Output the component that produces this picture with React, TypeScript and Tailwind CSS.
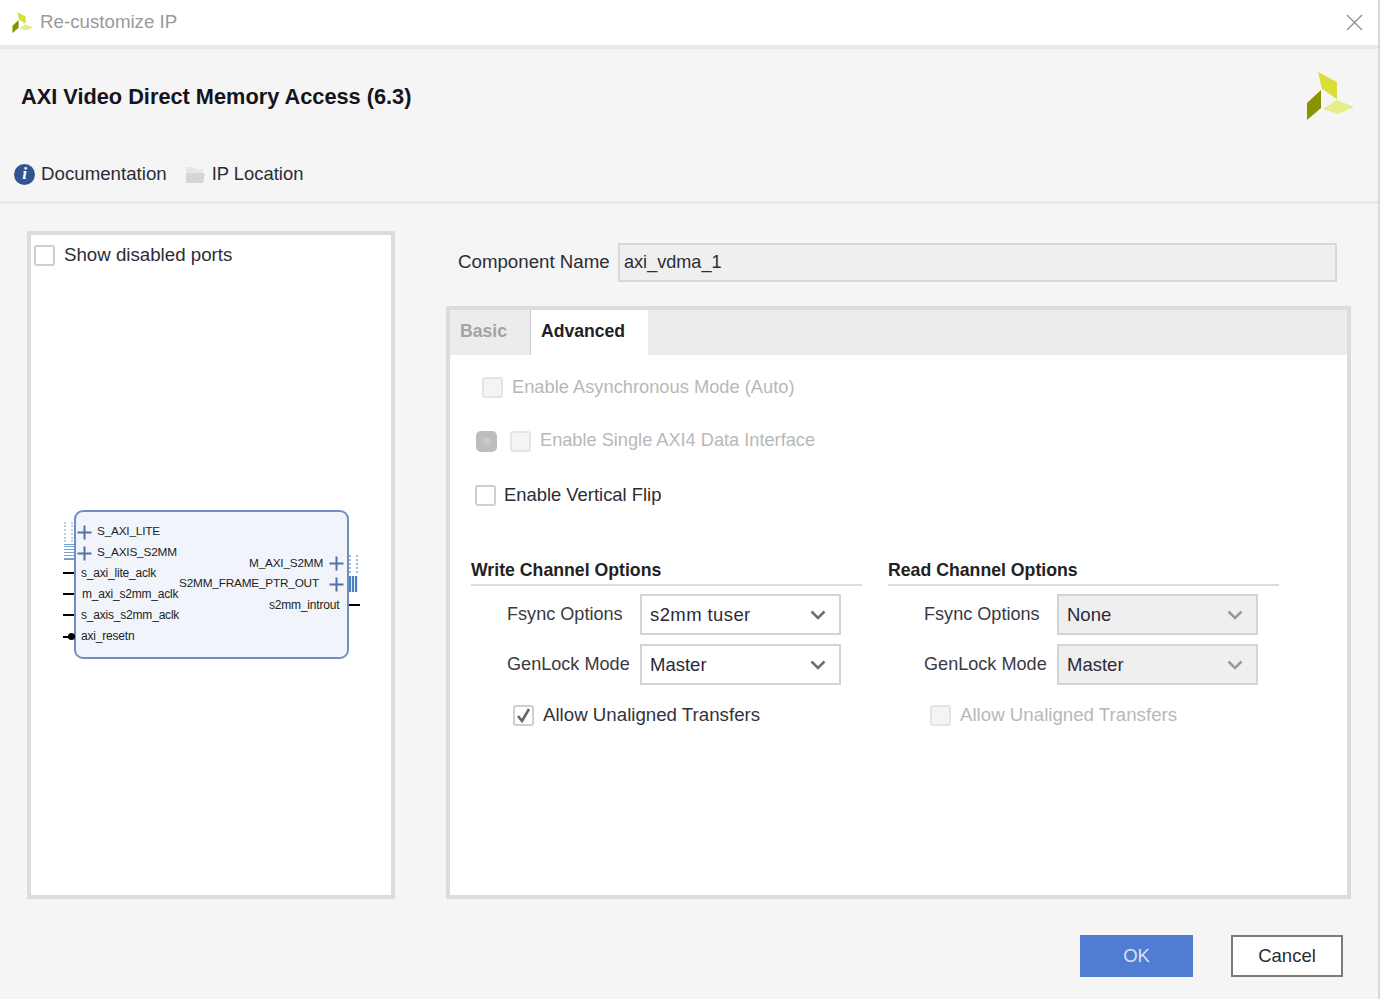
import React from "react";

const Logo = ({ s = 1 }: { s?: number }) => (
  <svg width={48 * s} height={48 * s} viewBox="0 0 48 48">
    <path d="M12 0 L31 10 L31 27 L16 17 Z" fill="#d9df36" />
    <path d="M15 18 L15 36 L1 48 L1 31 Z" fill="#8b9200" />
    <path d="M31 28 L48 35 L32 42 L17 37 Z" fill="#e6eb8c" />
  </svg>
);

const Check = ({ disabled = false, checked = false, className = "" }: { disabled?: boolean; checked?: boolean; className?: string }) => (
  <span
    className={`flex h-[21px] w-[21px] shrink-0 items-center justify-center rounded-[3px] border-2 ${disabled ? "border-[#e4e4e4] bg-[#f4f4f4]" : "border-[#cfcfcf] bg-white"} ${className}`}
  >
    {checked && (
      <svg width="17" height="17" viewBox="0 0 17 17">
        <path d="M3 9 L7 14 L14 2" fill="none" stroke="#666" strokeWidth="2.6" />
      </svg>
    )}
  </span>
);

const Select = ({ value, disabled = false, wide = false }: { value: string; disabled?: boolean; wide?: boolean }) => (
  <div
    className={`flex h-[41px] w-[201px] items-center justify-between border-2 border-[#d4d4d4] pl-[8px] pr-[13px] text-[18.5px] text-[#2b2b35] ${disabled ? "bg-[#efefef]" : "bg-white"}`}
  >
    <span className={wide ? "tracking-[0.4px]" : ""}>{value}</span>
    <svg width="16" height="10" viewBox="0 0 16 10">
      <path d="M1.5 1.5 L8 8 L14.5 1.5" fill="none" stroke={disabled ? "#9a9a9a" : "#6f6f6f"} strokeWidth="2.6" />
    </svg>
  </div>
);

const Channel = ({ title, fsync, ro, checked, width }: { title: string; fsync: string; ro?: boolean; checked: boolean; width: string }) => (
  <div className={`flex flex-col ${width}`}>
    <div className="border-b-2 border-[#dcdcdc] pb-[3px] text-[17.7px] font-bold leading-[22px] text-[#222]">{title}</div>
    <div className="mt-[8px] flex flex-col gap-[9px] pl-[36px] text-[18.1px] text-[#3a3a44]">
      <div className="flex items-center">
        <span className="w-[133px]">Fsync Options</span>
        <Select value={fsync} disabled={ro} wide={!ro} />
      </div>
      <div className="flex items-center">
        <span className="w-[133px]">GenLock Mode</span>
        <Select value="Master" disabled={ro} />
      </div>
    </div>
    <div className="mt-[16px] flex items-center gap-[9px] pl-[42px]">
      <Check checked={checked} disabled={ro} />
      <span className={`text-[18.7px] ${ro ? "text-[#b8b8b8]" : "text-[#33333d]"}`}>Allow Unaligned Transfers</span>
    </div>
  </div>
);

const Plus = ({ x, y }: { x: number; y: number }) => (
  <svg className="absolute" style={{ left: x, top: y }} width="15" height="15" viewBox="0 0 15 15">
    <path d="M7.5 0.5 V14.5 M0.5 7.5 H14.5" stroke="#4f72a6" strokeWidth="2" />
  </svg>
);

const Pin = ({ x, y, w = 11 }: { x: number; y: number; w?: number }) => (
  <span className="absolute h-[2px] bg-black" style={{ left: x, top: y, width: w }} />
);

const labels: [string, number, number, number][] = [
  ["S_AXI_LITE", 97, 523, 11.8],
  ["S_AXIS_S2MM", 97, 544, 11.8],
  ["s_axi_lite_aclk", 81, 565, 12],
  ["m_axi_s2mm_aclk", 82, 586, 12],
  ["s_axis_s2mm_aclk", 81, 607, 12],
  ["axi_resetn", 81, 628, 12],
  ["M_AXI_S2MM", 249, 555, 11.8],
  ["S2MM_FRAME_PTR_OUT", 179, 575, 11.8],
  ["s2mm_introut", 269, 597, 12],
];

const Diagram = () => (
  <div className="relative h-full w-full">
    <div className="absolute left-[43px] top-[275px] h-[149px] w-[275px] rounded-[9px] border-2 border-[#6f8fc0] bg-[#f1f5fb]" />
    {labels.map(([t, x, y, f]) => (
      <span
        key={t}
        className="absolute whitespace-nowrap text-[#222] [letter-spacing:-0.2px]"
        style={{ left: x - 31, top: y - 235, fontSize: f, lineHeight: "17px" }}
      >
        {t}
      </span>
    ))}
    <Plus x={46} y={290} />
    <Plus x={46} y={311} />
    <Plus x={298} y={321} />
    <Plus x={298} y={342} />
    <Pin x={32} y={337} />
    <Pin x={32} y={358} />
    <Pin x={32} y={379} />
    <Pin x={32} y={401} w={8} />
    <span className="absolute left-[37px] top-[398px] h-[7px] w-[7px] rounded-full bg-black" />
    <Pin x={318} y={369} />
    <span className="absolute left-[33px] top-[287px] h-[20px] w-[9px] border-x-2 border-dotted border-[#b9cde6]" />
    <span className="absolute left-[33px] top-[309px] h-[16px] w-[10px] border-y border-[#6f9bd0] bg-[repeating-linear-gradient(0deg,#7aa3d4_0,#7aa3d4_1px,#ffffff_1px,#ffffff_3px)]" />
    <span className="absolute left-[318px] top-[320px] h-[18px] w-[9px] border-x-2 border-dotted border-[#9dbbe0]" />
    <span className="absolute left-[318px] top-[341px] h-[16px] w-[9px] bg-[repeating-linear-gradient(90deg,#4f7fc0_0,#4f7fc0_2px,#dfe9f6_2px,#dfe9f6_3px)]" />
  </div>
);

export default function App() {
  return (
    <div className="flex h-[999px] w-[1380px] flex-col overflow-hidden border-r-2 border-[#d8d8d8] bg-[#f5f5f5] font-['Liberation_Sans',Arial,sans-serif]">
      <div className="flex h-[49px] shrink-0 items-center justify-between border-b-4 border-[#e8e8e8] bg-white pl-[12px] pr-[15px]">
        <div className="flex items-center gap-[7px]">
          <Logo s={0.44} />
          <span className="-mt-[1px] text-[18.7px] text-[#9a9a9a]">Re-customize IP</span>
        </div>
        <svg width="17" height="17" viewBox="0 0 17 17">
          <path d="M1 1 L16 16 M16 1 L1 16" stroke="#8a8a8a" strokeWidth="1.2" />
        </svg>
      </div>

      <div className="relative flex h-[155px] shrink-0 flex-col border-b-[3px] border-[#e8e8e8] pl-[21px]">
        <div className="mt-[35px] text-[21.75px] font-bold leading-[26px] text-[#14141c]">AXI Video Direct Memory Access (6.3)</div>
        <div className="absolute right-[24px] top-[23px]">
          <Logo />
        </div>
        <div className="-ml-[7px] mt-[53px] flex items-center text-[18.7px] leading-[22px] text-[#2c2c36]">
          <span className="mr-[6px] flex h-[21px] w-[21px] items-center justify-center rounded-full bg-[#33558f] font-['Liberation_Serif',serif] text-[17px] font-bold italic text-white">i</span>
          <span>Documentation</span>
          <svg className="ml-[18px] mr-[6px]" width="21" height="19" viewBox="0 0 21 19">
            <path d="M1 2 H8 L10 4 H18 V8 H1 Z" fill="#e6e6e6" />
            <path d="M1 8 H20 L18 18 H1 Z" fill="#d6d6d6" />
          </svg>
          <span className="text-[18.4px]">IP Location</span>
        </div>
      </div>

      <div className="flex min-h-0 flex-1 pl-[27px] pt-[27px]">
        <div className="relative h-[668px] w-[368px] shrink-0 border-4 border-[#dcdcdc] bg-white">
          <div className="flex items-center gap-[9px] pl-[3px] pt-[6px]">
            <Check />
            <span className="text-[18.7px] text-[#2c2c36]">Show disabled ports</span>
          </div>
          <div className="absolute inset-0">
            <Diagram />
          </div>
        </div>

        <div className="ml-[51px] flex w-[905px] flex-col">
          <div className="mt-[12px] flex h-[39px] items-center pl-[12px]">
            <span className="w-[160px] text-[18.7px] text-[#2c2c36]">Component Name</span>
            <div className="flex h-[39px] w-[719px] items-center border-2 border-[#d8d8d8] bg-[#efefef] pl-[4px] text-[18.1px] text-[#2c2c36]">axi_vdma_1</div>
          </div>

          <div className="mt-[24px] flex h-[593px] flex-col border-4 border-[#dcdcdc] bg-white">
            <div className="flex h-[45px] shrink-0 bg-[#ececec]">
              <div className="flex w-[81px] items-center border-r border-[#c8c8c8] pb-[3px] pl-[10px] text-[17.6px] font-bold text-[#a3a3a3]">Basic</div>
              <div className="flex w-[117px] items-center bg-white pb-[3px] pl-[10px] text-[17.6px] font-bold text-[#1f1f28]">Advanced</div>
            </div>
            <div className="flex flex-1 flex-col">
              <div className="mt-[21px] flex h-[22px] items-center gap-[9px] pl-[32px]">
                <Check disabled />
                <span className="text-[18.3px] text-[#b8b8b8]">Enable Asynchronous Mode (Auto)</span>
              </div>
              <div className="mt-[32px] flex h-[22px] items-center pl-[26px]">
                <span className="flex h-[21px] w-[21px] items-center justify-center rounded-[5px] bg-[#bdbdbd]">
                  <span className="h-[8px] w-[8px] rounded-full bg-[#c9c9c9]" />
                </span>
                <Check disabled className="ml-[13px]" />
                <span className="ml-[9px] text-[18.2px] text-[#b8b8b8]">Enable Single AXI4 Data Interface</span>
              </div>
              <div className="mt-[32px] flex h-[22px] items-center gap-[8px] pl-[25px]">
                <Check />
                <span className="text-[18.4px] text-[#2c2c36]">Enable Vertical Flip</span>
              </div>
              <div className="ml-[21px] mt-[53px] flex gap-[26px]">
                <Channel title="Write Channel Options" fsync="s2mm tuser" checked width="w-[391px]" />
                <Channel title="Read Channel Options" fsync="None" ro checked={false} width="w-[391px]" />
              </div>
            </div>
          </div>

          <div className="mt-[36px] flex justify-end gap-[38px] pr-[8px]">
            <div className="flex h-[42px] w-[113px] items-center justify-center bg-[#507cd1] text-[18.5px] text-[#d8e2f5]">OK</div>
            <div className="flex h-[42px] w-[112px] items-center justify-center border-2 border-[#7a7a7a] bg-white text-[18.5px] text-[#2c2c36]">Cancel</div>
          </div>
        </div>
      </div>
    </div>
  );
}
